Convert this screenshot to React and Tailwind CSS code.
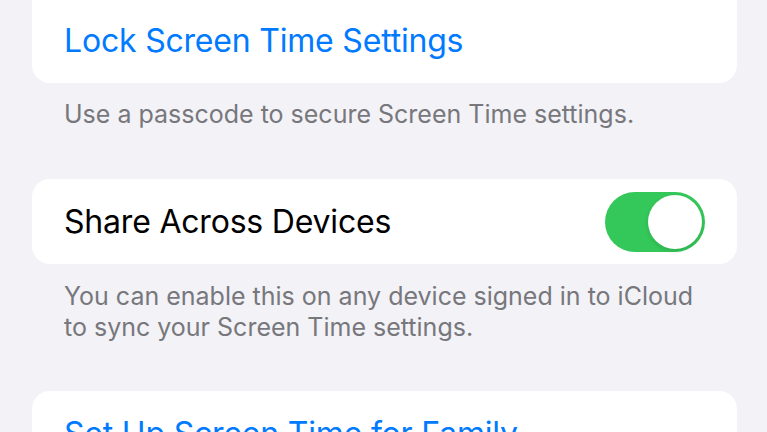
export default function App() {
  return (
    <div
      className="h-[432px] w-[767px] overflow-hidden bg-[#f2f2f7] pl-8 pr-[30px] antialiased"
      style={{ fontFamily: "Inter, 'Liberation Sans', sans-serif" }}
    >
      <div className="-mt-[2px] flex h-[85px] items-center rounded-b-[18px] bg-white px-8">
        <span className="text-[32px] tracking-[-0.2px] text-[#007aff]">Lock Screen Time Settings</span>
      </div>
      <p className="px-8 pt-[16px] text-[25px] leading-[31px] text-[#77777c]">
        Use a passcode to secure Screen Time settings.
      </p>

      <div className="mt-[49px] flex h-[85px] items-center justify-between rounded-[18px] bg-white pl-8 pr-8">
        <span className="text-[32px] tracking-[-0.2px] text-black">Share Across Devices</span>
        <div className="flex h-[60px] w-[100px] items-center justify-end rounded-full bg-[#34c759] p-[3px]">
          <div className="h-[54px] w-[54px] rounded-full bg-white shadow-[0_2px_4px_rgba(0,0,0,0.12)]" />
        </div>
      </div>
      <p className="px-8 pt-[17px] text-[25px] leading-[31px] text-[#77777c]">
        You can enable this on any device signed in to iCloud
        <br />
        to sync your Screen Time settings.
      </p>

      <div className="mt-[48px] flex h-[85px] items-center rounded-[18px] bg-white px-8">
        <span className="text-[32px] tracking-[-0.2px] text-[#007aff]">Set Up Screen Time for Family</span>
      </div>
    </div>
  );
}
